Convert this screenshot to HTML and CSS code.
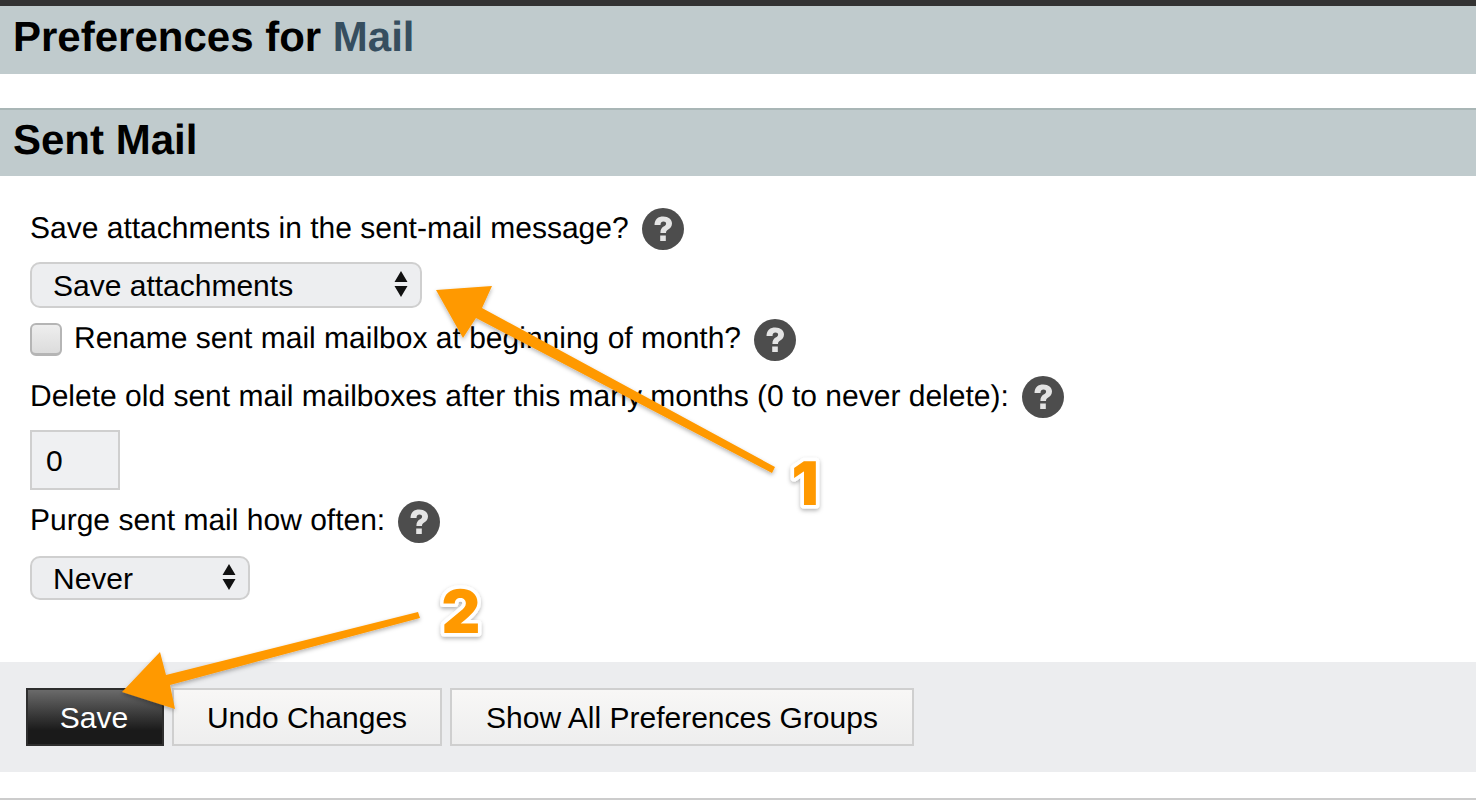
FILE: index.html
```html
<!DOCTYPE html>
<html lang="en">
<head>
<meta charset="utf-8">
<title>Preferences for Mail</title>
<link rel="stylesheet" href="styles.css">
</head>
<body>
<div class="page">
  <h1 class="band band-title">Preferences for <span class="app">Mail</span></h1>
  <h2 class="band band-section">Sent Mail</h2>
  <form class="prefs">
    <div class="row row-q1">
      <label>Save attachments in the sent-mail message?</label>
      <svg class="help" viewBox="0 0 44 44"><use href="#help-icon"/></svg>
    </div>
    <div class="selectbox selectbox-wide">
      <select><option>Save attachments</option></select>
      <svg class="updown" viewBox="0 0 14 28"><use href="#updown-icon"/></svg>
    </div>
    <div class="row row-check">
      <input type="checkbox" class="check" id="rename">
      <label for="rename">Rename sent mail mailbox at beginning of month?</label>
      <svg class="help help-low" viewBox="0 0 44 44"><use href="#help-icon"/></svg>
    </div>
    <div class="row row-q3">
      <label>Delete old sent mail mailboxes after this many months (0 to never delete):</label>
      <svg class="help" viewBox="0 0 44 44"><use href="#help-icon"/></svg>
    </div>
    <input class="number" type="text" value="0">
    <div class="row row-q4">
      <label>Purge sent mail how often:</label>
      <svg class="help help-low" viewBox="0 0 44 44"><use href="#help-icon"/></svg>
    </div>
    <div class="selectbox selectbox-narrow">
      <select><option>Never</option></select>
      <svg class="updown" viewBox="0 0 14 28"><use href="#updown-icon"/></svg>
    </div>
  </form>
  <div class="actions">
    <button type="button" class="btn btn-primary">Save</button>
    <button type="button" class="btn btn-undo">Undo Changes</button>
    <button type="button" class="btn btn-all">Show All Preferences Groups</button>
  </div>
  <div class="rule"></div>
</div>

<svg class="defs" aria-hidden="true">
  <defs>
    <g id="help-icon">
      <circle cx="22" cy="22" r="21" fill="#4d4d4d"/>
      <path d="M13.500 18c0-6 3.800-8.500 8.800-8.500 5.200 0 8.700 2.900 8.700 7 0 3.200-1.800 4.700-3.800 6-1.500 1-2.200 1.700-2.200 3.500h-5.600c0-3.500 1.200-5 3.200-6.400 1.600-1.100 2.500-1.700 2.500-2.900 0-1.300-1-2.100-2.600-2.100-1.800 0-2.900 1-3 3.400z" fill="#e4e4e4"/>
      <rect x="19.200" y="28.500" width="5.600" height="5.500" fill="#e4e4e4"/>
    </g>
    <g id="updown-icon">
      <path d="M7 1 13.500 12H.5z M.5 16h13L7 27z" fill="#111"/>
    </g>
  </defs>
</svg>

<svg class="annotations" viewBox="0 0 1476 806">
  <defs>
    <filter id="soft" x="-10%" y="-10%" width="120%" height="130%">
      <feDropShadow dx="0" dy="2" stdDeviation="2" flood-color="#000" flood-opacity=".3"/>
    </filter>
  </defs>
  <g filter="url(#soft)">
    <polygon fill="#ff9900" points="436,290 492,286 482,308 775,467 772,473 476,318 463,338"/>
    <polygon fill="#ff9900" points="122,692 160,652 166,675 418,612 420,618 170,685 175,709"/>
    <text class="mark" x="805" y="505">1</text>
    <text class="mark" x="461" y="633">2</text>
  </g>
</svg>
</body>
</html>
```
FILE: styles.css
```css
* { box-sizing: border-box; }
html, body { margin: 0; padding: 0; background: #fff; }
body {
  width: 1476px;
  height: 806px;
  overflow: hidden;
  position: relative;
  font-family: "Liberation Sans", Arial, sans-serif;
  color: #000;
  text-rendering: geometricPrecision;
}
.page { border-top: 6px solid #333; }
.band {
  margin: 0;
  height: 68px;
  padding-left: 13px;
  background: #c0cbcd;
  font-size: 42px;
  font-weight: 700;
  line-height: 62px;
}
.band-section {
  margin-top: 34px;
  border-top: 2px solid #a9b6b6;
  line-height: 60px;
}
.app { color: #364e5f; }
.prefs {
  height: 486px;
  padding: 31px 30px 0;
  display: flex;
  flex-direction: column;
  align-items: flex-start;
  font-size: 30px;
}
.row { display: flex; align-items: center; height: 44px; }
.row label { line-height: 44px; }
.help { width: 44px; height: 44px; margin-left: 12px; flex: none; filter: blur(.5px); }
.help-low { margin-top: 2px; }
.row-check { margin-top: 9px; }
.row-q3 { margin-top: 14px; }
.row-q4 { margin-top: 9px; }
.check {
  appearance: none;
  margin: 1px 12px 0 0;
  width: 32px;
  height: 33px;
  border: 2px solid #b5b5b5;
  border-bottom-width: 3px;
  border-radius: 6px;
  background: linear-gradient(#eeeeee, #dcdcdc);
}
.selectbox {
  position: relative;
  margin-top: 11px;
}
.selectbox select {
  appearance: none;
  display: block;
  width: 100%;
  height: 100%;
  padding: 0 0 0 21px;
  border: 2px solid #cfcfcf;
  border-radius: 10px;
  background: #edeef0;
  font: inherit;
  color: #000;
}
.selectbox-wide { width: 392px; height: 46px; }
.selectbox-narrow { width: 220px; height: 44px; margin-top: 13px; }
.updown {
  position: absolute;
  top: 50%;
  right: 14px;
  width: 14px;
  height: 28px;
  margin-top: -15px;
}
.number {
  display: block;
  width: 90px;
  height: 60px;
  margin-top: 11px;
  padding: 2px 0 0 14px;
  border: 2px solid #cfcfcf;
  background: #eff0f2;
  font: inherit;
  color: #000;
}
.actions {
  height: 110px;
  padding: 26px 26px 0;
  display: flex;
  gap: 8px;
  align-items: flex-start;
  background: #ecedef;
}
.btn {
  height: 58px;
  padding: 2px 0 0;
  font: 30px "Liberation Sans", Arial, sans-serif;
  border: 2px solid #cfcfcf;
  background: linear-gradient(#f8f7f6, #eeeeee);
  color: #000;
}
.btn-primary {
  width: 138px;
  padding-right: 2px;
  border: 2px solid #2e2e2e;
  background: linear-gradient(#6a6a6a, #1a1a1a 75%);
  color: #fff;
}
.btn-undo { width: 270px; }
.btn-all { width: 464px; }
.rule { margin-top: 26px; height: 2px; background: #cccccc; }
.defs { position: absolute; width: 0; height: 0; }
.annotations {
  position: absolute;
  left: 0;
  top: 0;
  width: 1476px;
  height: 806px;
  pointer-events: none;
}
.mark {
  font: 900 60px Inter, "Liberation Sans", sans-serif;
  text-anchor: middle;
  fill: #ff9900;
  stroke: #fff;
  stroke-width: 7px;
  stroke-linejoin: round;
  paint-order: stroke;
}
```
